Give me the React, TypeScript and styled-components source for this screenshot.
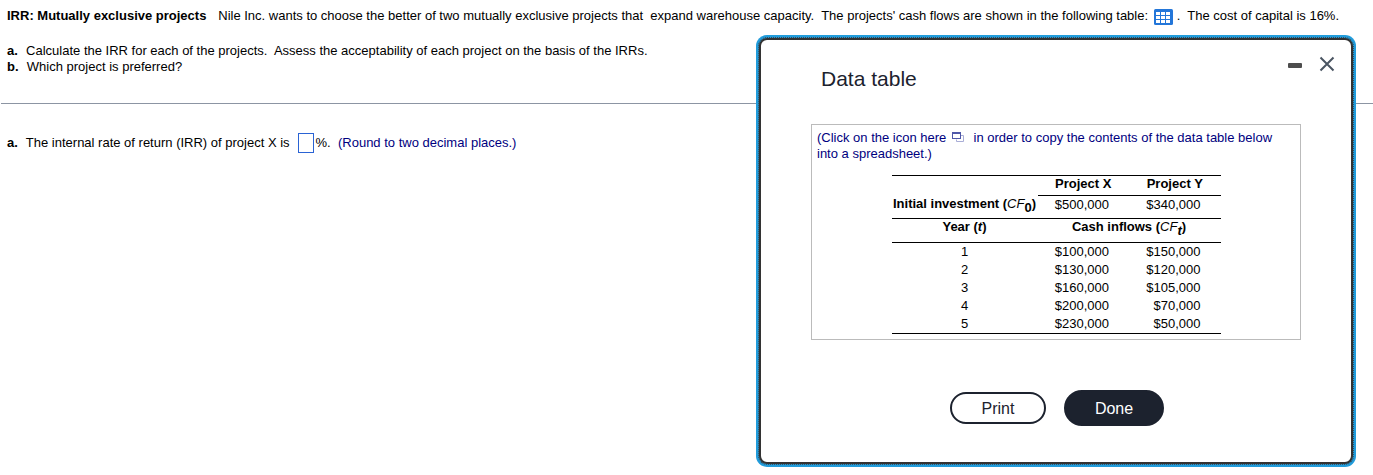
import React from "react";
import styled, { createGlobalStyle } from "styled-components";

const GlobalStyle = createGlobalStyle`
  *, *::before, *::after { box-sizing: border-box; }
  body {
    margin: 0;
    background: #fff;
    color: #000;
    font-family: "Liberation Sans", Arial, sans-serif;
    font-size: 13px;
    line-height: 16px;
  }
`;

const Page = styled.main`
  position: relative;
  min-height: 100vh;
  padding: 8px 0 0 1px;
`;

const Lead = styled.b`
  margin-right: 1px;
`;

const Question = styled.section`
  padding: 0 6px 28px;
  border-bottom: 1px solid #8c95a3;
`;

const Intro = styled.p`
  margin: 0 0 18px;
  white-space: pre-wrap;
`;

const Part = styled.p`
  margin: 0;
  white-space: pre-wrap;
`;

const Answer = styled.section`
  display: flex;
  align-items: center;
  padding: 29px 6px 0;
  white-space: pre;
`;

const AnswerInput = styled.input`
  width: 16px;
  height: 20px;
  margin: 0 2px 0 8px;
  padding: 0;
  border: 1px solid #2a63d4;
  background: #fff;
  font: inherit;
`;

const Hint = styled.span`
  color: #000080;
`;

const IconButton = styled.button`
  display: inline-flex;
  padding: 0;
  border: 0;
  background: none;
  color: #4a5562;
  cursor: pointer;
`;

const TableIconButton = styled(IconButton)`
  margin: 0 4px 0 2px;
  vertical-align: middle;
  height: 16px;
`;

const CopyButton = styled(IconButton)`
  margin: 0 6px 0 2px;
  vertical-align: baseline;
`;

const Dialog = styled.div`
  position: absolute;
  top: 38px;
  right: 20px;
  width: 594px;
  padding: 14px 16px 36px 50px;
  border: 2px solid #333;
  border-radius: 8px;
  outline: 1px dotted #3a4a55;
  box-shadow: 0 0 0 3px #219cdb;
  background: #fff;
`;

const DialogHeader = styled.header`
  display: flex;
  justify-content: space-between;
  align-items: flex-start;
`;

const DialogTitle = styled.h2`
  margin: 13px 0 0 10px;
  color: #1c222e;
  font-size: 21px;
  font-weight: 400;
  line-height: 24px;
`;

const WindowControls = styled.div`
  display: flex;
  align-items: center;
  gap: 17px;
  padding-top: 2px;
`;

const Panel = styled.div`
  margin: 33px 34px 0 0;
  padding: 5px;
  border: 1px solid #bbb;
`;

const CopyNote = styled.p`
  margin: 0;
  color: #000080;
  white-space: pre-wrap;
`;

const DataTable = styled.table`
  width: 329px;
  margin: 13px auto 0;
  border-collapse: separate;
  border-spacing: 0;
  border-top: 1px solid #000;
  border-bottom: 1px solid #000;
  table-layout: fixed;
`;

const LabelColumn = styled.col`
  width: 146px;
`;

const Row = styled.tr<{ $height?: number }>`
  height: ${(p) => p.$height ?? 18}px;
`;

const HeadCell = styled.th<{ $ruled?: boolean }>`
  padding: 0;
  border-bottom: ${(p) => (p.$ruled ? "1px solid #000" : "0")};
  font-weight: 700;
  line-height: 16px;
  text-align: center;
  white-space: nowrap;
  vertical-align: top;

  sub {
    font-size: 13px;
    font-weight: 700;
    line-height: 0;
    vertical-align: -4px;
  }
`;

const Symbol = styled.i`
  font-weight: 400;
`;

const Cell = styled.td<{ $center?: boolean; $ruled?: boolean }>`
  padding: ${(p) => (p.$center ? "1px 0" : "1px 20px 1px 0")};
  border-bottom: ${(p) => (p.$ruled ? "1px solid #000" : "0")};
  text-align: ${(p) => (p.$center ? "center" : "right")};
  vertical-align: top;
`;

const DialogFooter = styled.footer`
  display: flex;
  align-items: center;
  justify-content: center;
  gap: 18px;
  margin: 50px 32px 0 0;
`;

const PillButton = styled.button<{ $primary?: boolean }>`
  width: ${(p) => (p.$primary ? 100 : 96)}px;
  height: ${(p) => (p.$primary ? 36 : 32)}px;
  padding: 1px 0 0;
  border: 2px solid #1c222e;
  border-radius: 18px;
  background: ${(p) => (p.$primary ? "#1c222e" : "#fff")};
  color: ${(p) => (p.$primary ? "#fff" : "#1c222e")};
  font-family: inherit;
  font-size: 16px;
  cursor: pointer;
`;

const TableIcon = () => (
  <svg width="19" height="16" viewBox="0 0 19 16" aria-hidden="true">
    <rect width="19" height="16" rx="1.5" fill="#2376d9" />
    {[3, 7, 11].map((y) =>
      [2, 7, 12].map((x) => (
        <rect key={`${x}-${y}`} x={x} y={y} width="4" height="3" fill="#fff" />
      ))
    )}
  </svg>
);

const CopyIcon = () => (
  <svg width="12" height="10" viewBox="0 0 12 10" aria-hidden="true">
    <path d="M8.5 3.5h3v6h-7v-2" fill="none" stroke="#a9add6" />
    <rect x="0.5" y="0.5" width="8" height="6" fill="#fff" stroke="#5058a8" />
    <path d="M0 1h9" stroke="#5058a8" strokeWidth="2" />
  </svg>
);

const inflows = [
  ["1", "$100,000", "$150,000"],
  ["2", "$130,000", "$120,000"],
  ["3", "$160,000", "$105,000"],
  ["4", "$200,000", "$70,000"],
  ["5", "$230,000", "$50,000"],
];

export default function App() {
  return (
    <Page>
      <GlobalStyle />
      <Question>
        <Intro>
          <Lead>IRR: Mutually exclusive projects</Lead>
          {"\u00a0\u00a0 Nile Inc. wants to choose the better of two mutually exclusive projects that\u00a0 expand warehouse capacity.\u00a0 The projects' cash flows are shown in the following table: "}
          <TableIconButton type="button" aria-label="Open data table">
            <TableIcon />
          </TableIconButton>
          {".\u00a0 The cost of capital is 16%."}
        </Intro>
        <Part>
          <Lead>a.</Lead>
          {"\u00a0 Calculate the IRR for each of the projects.\u00a0 Assess the acceptability of each project on the basis of the IRRs."}
        </Part>
        <Part>
          <Lead>b.</Lead>
          {"\u00a0 Which project is preferred?"}
        </Part>
      </Question>

      <Answer>
        <label htmlFor="irr-x">
          <Lead>a.</Lead>
          {"\u00a0 The internal rate of return (IRR) of project X is"}
        </label>
        <AnswerInput id="irr-x" type="text" />
        <span>{"%.\u00a0 "}</span>
        <Hint>(Round to two decimal places.)</Hint>
      </Answer>

      <Dialog role="dialog" aria-labelledby="dialog-title">
        <DialogHeader>
          <DialogTitle id="dialog-title">Data table</DialogTitle>
          <WindowControls>
            <IconButton type="button" aria-label="Minimize">
              <svg width="14" height="16" viewBox="0 0 14 16" aria-hidden="true">
                <rect y="7" width="14" height="5" rx="1" fill="#4d4d4d" />
              </svg>
            </IconButton>
            <IconButton type="button" aria-label="Close">
              <svg width="16" height="16" viewBox="0 0 16 16" aria-hidden="true">
                <path d="M1.5 1.5l13 13M14.5 1.5l-13 13" stroke="currentColor" strokeWidth="2" />
              </svg>
            </IconButton>
          </WindowControls>
        </DialogHeader>

        <Panel>
          <CopyNote>
            {"(Click on the icon here "}
            <CopyButton type="button" aria-label="Copy table">
              <CopyIcon />
            </CopyButton>
            {" in order to copy the contents of the data table below into a spreadsheet.)"}
          </CopyNote>
          <DataTable>
            <colgroup>
              <LabelColumn />
              <col />
              <col />
            </colgroup>
            <thead>
              <Row $height={20}>
                <td />
                <HeadCell scope="col" $ruled>Project X</HeadCell>
                <HeadCell scope="col" $ruled>Project Y</HeadCell>
              </Row>
            </thead>
            <tbody>
              <Row $height={23}>
                <HeadCell scope="row" $ruled>
                  Initial investment (<Symbol>CF</Symbol><sub>0</sub>)
                </HeadCell>
                <Cell $ruled>$500,000</Cell>
                <Cell $ruled>$340,000</Cell>
              </Row>
              <Row $height={24}>
                <HeadCell scope="col" $ruled>
                  Year (<i>t</i>)
                </HeadCell>
                <HeadCell scope="colgroup" colSpan={2} $ruled>
                  Cash inflows (<Symbol>CF<sub>t</sub></Symbol>)
                </HeadCell>
              </Row>
              {inflows.map(([year, x, y]) => (
                <Row key={year}>
                  <Cell $center>{year}</Cell>
                  <Cell>{x}</Cell>
                  <Cell>{y}</Cell>
                </Row>
              ))}
            </tbody>
          </DataTable>
        </Panel>

        <DialogFooter>
          <PillButton type="button">Print</PillButton>
          <PillButton type="button" $primary>Done</PillButton>
        </DialogFooter>
      </Dialog>
    </Page>
  );
}
